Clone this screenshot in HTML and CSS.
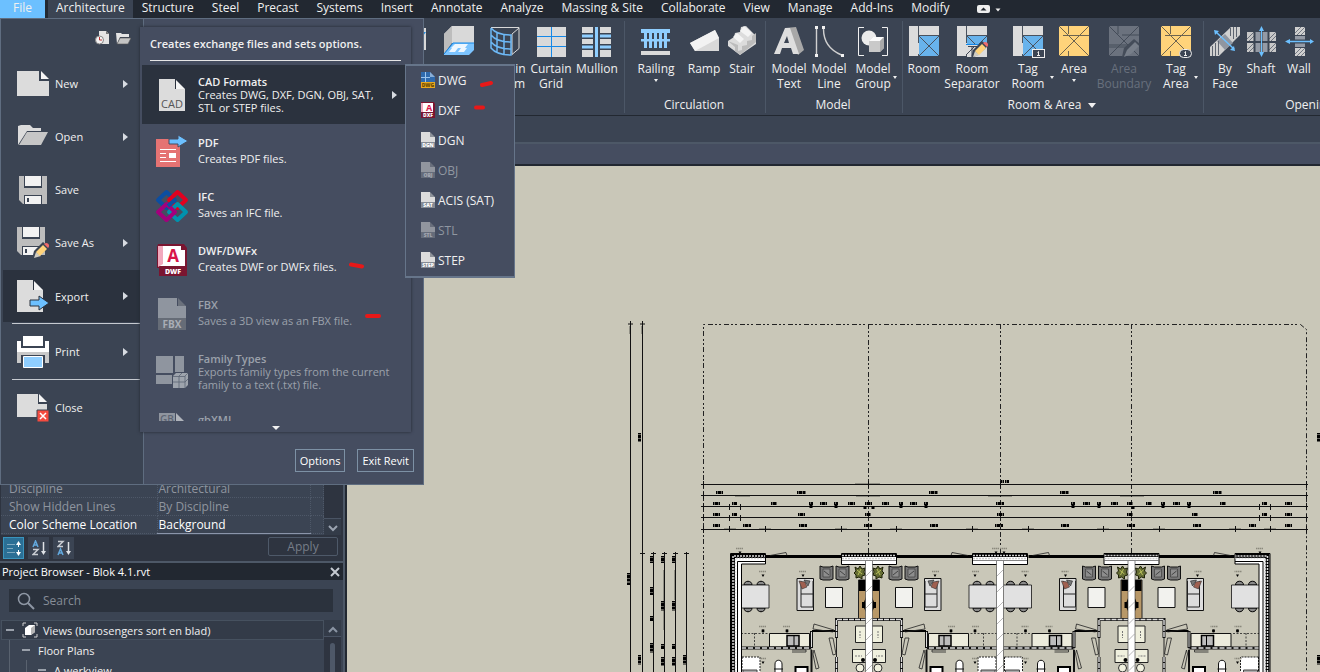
FILE: index.html
```html
<!DOCTYPE html>
<html lang="en">
<head>
<meta charset="utf-8">
<title>Blok 4.1.rvt</title>
<link rel="stylesheet" href="styles.css">
</head>
<body>
<div class="app">
  <nav class="tabs">
    <button class="tab tab-file">File</button>
    <button class="tab tab-active">Architecture</button>
    <button class="tab">Structure</button>
    <button class="tab">Steel</button>
    <button class="tab">Precast</button>
    <button class="tab">Systems</button>
    <button class="tab">Insert</button>
    <button class="tab">Annotate</button>
    <button class="tab">Analyze</button>
    <button class="tab">Massing &amp; Site</button>
    <button class="tab">Collaborate</button>
    <button class="tab">View</button>
    <button class="tab">Manage</button>
    <button class="tab">Add-Ins</button>
    <button class="tab">Modify</button>
    <button class="tab tab-toggle" aria-label="Minimize ribbon"><svg width="24" height="10" viewBox="0 0 24 10"><rect x="0" y="1" width="13" height="8" rx="2" fill="#eee"/><path d="M3.500 6.500h6L6.500 3.500z" fill="#222831"/><path d="M18.500 4.500h5l-2.500 3z" fill="#eee"/></svg></button>
  </nav>

  <div class="ribbon">
    <section class="panel panel-build">
      <div class="tools">
        <button class="tool w48" aria-label="Component"><svg class="ico" viewBox="0 0 32 32"><path d="M2 2h29v22H2z" fill="#d9d9d9"/><path d="M25 6h6l-3 4z" fill="#2a8fe0"/></svg></button>
        <button class="tool w48" aria-label="Floor"><svg class="ico" viewBox="0 0 32 32"><path d="M1 8l8-8h22v17H1z" fill="#d9d9d9"/><path d="M1 8l8-8v17L1 28z" fill="#bdbdbd"/><path d="M1 28l9-11h21v7l-5 5H1z" fill="#7cc4ff"/><path d="M8 22l4-4h6l-3 4zM18 18h7l-3 4h-7zM6 26l3-4h6l-3 4zM18 22h6l-3 4h-6z" fill="#eef7ff"/><path d="M1 28l9-11h21" fill="none" stroke="#1488e8"/></svg></button>
        <button class="tool w44"><svg class="ico" viewBox="0 0 32 32"><g fill="none" stroke="#d9d9d9"><path d="M2 1.500h28v21l-7 6V8l7-6"/></g><g fill="none" stroke="#6db8f5" stroke-width="1.500"><path d="M2 2v20c4 5 12 7 20 7V9C14 9 6 7 2 2M2 9c4 5 12 7 20 7M2 16c4 5 12 7 20 7M8 7v20M15 9v20"/></g></svg><span>Curtain<br>System</span></button>
        <button class="tool w48"><svg class="ico" viewBox="0 0 32 32"><path d="M2 1h29v30H2z" fill="#d9d9d9"/><path d="M2 10.500h29M2 20.500h29M16.500 1v30" stroke="#1488e8" fill="none"/></svg><span>Curtain<br>Grid</span></button>
        <button class="tool w44"><svg class="ico" viewBox="0 0 32 32"><path d="M1 1h29v30H1z" fill="#d9d9d9"/><path d="M1 7h29v6H1zM1 18h29v6H1zM12 1h7v30h-7z" fill="#3b4453"/><path d="M1 8.500h11v3H1zM19 8.500h11v3H19zM1 19.500h11v3H1zM19 19.500h11v3H19zM14 1h3v30h-3z" fill="#8fceff"/></svg><span>Mullion</span></button>
      </div>
    </section>
    <section class="panel">
      <div class="tools">
        <button class="tool w56 drop-below"><svg class="ico" viewBox="0 0 32 32"><path d="M1 3h29v4H1zM1 13h29v2.500H1zM4 7h3v15H4zM9 7h3v15H9zM14 7h3v15h-3zM19 7h3v15h-3zM24 7h3v15h-3z" fill="#8fceff"/><path d="M1 25h29v4H1z" fill="#d9d9d9"/></svg><span>Railing</span></button>
        <button class="tool w40"><svg class="ico" viewBox="0 0 32 32"><path d="M2 17L27 4l4 8v13H7z" fill="#d9d9d9"/><path d="M2 17L27 4l4 8L7 25z" fill="#f2f2f2"/></svg><span>Ramp</span></button>
        <button class="tool w36"><svg class="ico" viewBox="0 0 32 32"><path d="M2 15l6-4 1-4 5-1 1-5 5-1 10 10v8L14 29 2 20z" fill="#dcdcdc"/><path d="M2 15l7 6v4l5 4 16-13V7l-4 3v4l-5 1v4l-5 1v4l-4 1v-6z" fill="#bcbcbc"/><path d="M7 11l7 6 4-4-7-6zM14 5l8 6 4-4-8-7z" fill="#f4f4f4"/></svg><span>Stair</span></button>
      </div>
      <h2 class="panel-name">Circulation</h2>
    </section>
    <section class="panel">
      <div class="tools">
        <button class="tool w40"><svg class="ico" viewBox="0 0 32 32"><path d="M12 2l11-1 8 23-6 5-9-20z" fill="#a8a8a8"/><path d="M1 28L12 2h5l9 26h-6l-2-6H9l-2 6zm10-11h5l-2-7z" fill="#dedede" fill-rule="evenodd"/></svg><span>Model<br>Text</span></button>
        <button class="tool w40"><svg class="ico" viewBox="0 0 32 32"><path d="M3.500 3v26M10.500 3c0 12 6 21 18 26" fill="none" stroke="#d0d0d0" stroke-width="1.400"/><path d="M2 0h3v3H2zM9 0h3v3H9zM2 28h3v3H2zM28 28h3v3h-3z" fill="#f2f2f2"/></svg><span>Model<br>Line</span></button>
        <button class="tool w48 drop-side"><svg class="ico" viewBox="0 0 32 32"><path d="M7 1.500H1.500v28H7M25 1.500h5.500v28H25" fill="none" stroke="#f0f0f0"/><circle cx="12" cy="12" r="7.500" fill="#ebebeb"/><path d="M12 15l4-4h11v11l-4 4H12z" fill="#c9c9c9"/><path d="M12 15l4-4h11l-4 4z" fill="#fafafa"/><path d="M23 15l4-4v11l-4 4z" fill="#a9a9a9"/></svg><span>Model<br>Group</span></button>
      </div>
      <h2 class="panel-name">Model</h2>
    </section>
    <section class="panel">
      <div class="tools">
        <button class="tool w36"><svg class="ico" viewBox="0 0 32 32"><use href="#room"/></svg><span>Room</span></button>
        <button class="tool w60"><svg class="ico" viewBox="0 0 32 32"><use href="#room"/><path d="M11 18h20v13H11z" fill="#dcdcdc"/><path d="M10 18.500h20" stroke="#1488e8"/><path d="M12 20.500h14M10 29l9-9M16 20v10" stroke="#3f4653" fill="none"/><use href="#pencil"/></svg><span>Room<br>Separator</span></button>
        <button class="tool w52 drop-side"><svg class="ico" viewBox="0 0 32 32"><use href="#room"/><rect x="20.500" y="23.500" width="12" height="8" fill="#3b4453" stroke="#eee"/><path d="M25.500 26.500l1-1v4m-1.500 0h3" stroke="#eee" fill="none"/></svg><span>Tag<br>Room</span></button>
        <button class="tool w40 drop-below"><svg class="ico" viewBox="0 0 32 32"><use href="#area"/></svg><span>Area</span></button>
        <button class="tool w60" disabled><svg class="ico" viewBox="0 0 32 32"><path d="M1 0h30v30H1z" fill="#6b727e"/><path d="M1 0l30 30M31 0L1 30M1 19h30M10 0v8M14 9h17M1 21h24" stroke="#444c59" fill="none"/><path d="M14 31l2-9 10-9 6 5-10 9z" fill="#444c59"/><path d="M16 31l3-7 8-8 4 4-8 8z" fill="#777e89"/></svg><span>Area<br>Boundary</span></button>
        <button class="tool w44 drop-side"><svg class="ico" viewBox="0 0 32 32"><use href="#area"/><rect x="19.500" y="23.500" width="12" height="8" rx="4" fill="#3b4453" stroke="#eee"/><path d="M24.500 26.500l1-1v4m-1.500 0h3" stroke="#eee" fill="none"/></svg><span>Tag<br>Area</span></button>
      </div>
      <h2 class="panel-name panel-more">Room &amp; Area</h2>
    </section>
    <section class="panel">
      <div class="tools">
        <button class="tool w36"><svg class="ico" viewBox="0 0 32 32"><path d="M1 30V21L22 1h9v8L10 30z" fill="#d0d0d0"/><path d="M8 15l8 9 8-7-8-9z" fill="#9096a0"/><path d="M3.500 20v10M6.500 17v13M9.500 15v14M21.500 2v8M24.500 1v12M27.500 1v10" stroke="#5d6470" fill="none"/><path d="M7 6l18 17" stroke="#6cc0ff" stroke-width="1.500"/><path d="M5 4l5 1-4 4zM26 25l-5-1 4-4z" fill="#6cc0ff"/></svg><span>By<br>Face</span></button>
        <button class="tool w36"><svg class="ico" viewBox="0 0 32 32"><path d="M2 6h29v9H2zM2 17h29v9H2z" fill="#c8c8c8"/><path d="M2 13l7-7M4 15l6-6M24 13l7-7M26 15l5-5M2 24l7-7M4 26l6-6M24 24l7-7M26 26l5-5" stroke="#6c727d"/><path d="M10 6h13v9H10zM10 17h13v9H10z" fill="#949aa5"/><path d="M9.500 5v22M23.500 5v22M16.500 5v22" stroke="#3b4453" stroke-width="2"/><path d="M16.500 3v25" stroke="#6cc0ff"/><path d="M14 5l2.500-5L19 5zM14 26h5l-2.500 5z" fill="#6cc0ff"/></svg><span>Shaft</span></button>
        <button class="tool w40"><svg class="ico" viewBox="0 0 32 32"><path d="M12 1h10v8H12zM12 22h10v8H12z" fill="#d0d0d0"/><path d="M12 7l6-6M14 9l8-8M18 9l4-4M12 28l6-6M14 30l8-8M18 30l4-4" stroke="#747a84"/><path d="M12 10h10v11H12z" fill="#949aa5"/><path d="M3 15.500h27" stroke="#3b4453" stroke-width="4"/><path d="M4 15.500h25" stroke="#6cc0ff" stroke-width="1.500"/><path d="M7 13l-5 2.500L7 18zM27 13v5l4-2.500z" fill="#6cc0ff"/></svg><span>Wall</span></button>
        <button class="tool w44" aria-label="Vertical"></button>
        <button class="tool w48" aria-label="Dormer"></button>
      </div>
      <h2 class="panel-name">Opening</h2>
    </section>
  </div>
  <div class="options-bar"></div>
  <div class="view-bar"></div>

  <main class="workspace">
    <aside class="dock">
      <section class="properties">
        <div class="prop-body">
          <table class="props">
            <tr><th scope="row">Discipline</th><td>Architectural</td><td></td></tr>
            <tr><th scope="row">Show Hidden Lines</th><td>By Discipline</td><td></td></tr>
            <tr class="lit"><th scope="row">Color Scheme Location</th><td>Background</td><td></td></tr>
          </table>
          <div class="scroll"><button class="step" aria-label="Scroll down"><svg width="10" height="7" viewBox="0 0 10 7"><path d="M1 1l4 4 4-4" fill="none" stroke="#9aa3b0" stroke-width="2"/></svg></button></div>
        </div>
        <div class="prop-tools">
          <button class="sq sq-on" aria-label="Group"><svg width="14" height="16" viewBox="0 0 14 16"><path d="M0 4.500h8M0 8.500h6M0 12.500h8" stroke="#7fa9c0"/><path d="M11.500 3v4M11.500 10v4" stroke="#fff"/><path d="M9 5l2.500-4L14 5zM9 12h5l-2.500 4z" fill="#fff"/></svg></button>
          <button class="sq" aria-label="Sort ascending"><svg width="14" height="16" viewBox="0 0 14 16"><path d="M1 7l2.500-6L6 7M2 5h3" stroke="#62a8dd" stroke-width="1.500" fill="none"/><path d="M1 9.500h5L1 14.500h5" stroke="#c8ccd2" stroke-width="1.500" fill="none"/><path d="M11.500 2v10" stroke="#dfe2e6" stroke-width="1.500"/><path d="M9 11h5l-2.500 4z" fill="#dfe2e6"/></svg></button>
          <button class="sq" aria-label="Sort descending"><svg width="14" height="16" viewBox="0 0 14 16"><path d="M1 1.500h5L1 6.500h5" stroke="#c8ccd2" stroke-width="1.500" fill="none"/><path d="M1 15l2.500-6L6 15M2 13h3" stroke="#62a8dd" stroke-width="1.500" fill="none"/><path d="M11.500 2v10" stroke="#dfe2e6" stroke-width="1.500"/><path d="M9 11h5l-2.500 4z" fill="#dfe2e6"/></svg></button>
          <button class="apply" disabled>Apply</button>
        </div>
      </section>
      <section class="browser">
        <header class="browser-head"><h2>Project Browser - Blok 4.1.rvt</h2><button class="close" aria-label="Close"><svg width="10" height="10" viewBox="0 0 10 10"><path d="M1 1l8 8M9 1L1 9" stroke="#c5cad1" stroke-width="2"/></svg></button></header>
        <label class="search"><svg width="18" height="18" viewBox="0 0 18 18"><circle cx="7" cy="7" r="5.500" fill="none" stroke="#8e97a4" stroke-width="1.500"/><path d="M11 11l6 6" stroke="#8e97a4" stroke-width="2"/></svg><input type="text" placeholder="Search" aria-label="Search"></label>
        <div class="tree-wrap">
          <ul class="tree">
            <li class="root"><i class="minus"></i><svg width="16" height="16" viewBox="0 0 16 16"><path d="M1 4V1h3M12 1h3v3M15 12v3h-3M4 15H1v-3" fill="none" stroke="#d0d0d0"/><path d="M3 6l4-3h6v7l-4 3H3z" fill="#fff"/><path d="M9 6l4-3v7l-4 3z" fill="#b5b5b5"/></svg>Views (burosengers sort en blad)</li>
            <li class="lvl1"><i class="minus"></i>Floor Plans</li>
            <li class="lvl2"><i class="minus"></i>A werkview</li>
          </ul>
          <div class="scroll scroll-up"><button class="step" aria-label="Scroll up"><svg width="10" height="7" viewBox="0 0 10 7"><path d="M1 6l4-4 4 4" fill="none" stroke="#8a94a3" stroke-width="2"/></svg></button><i class="thumb"></i></div>
        </div>
      </section>
    </aside>
    <div class="canvas">
      <svg class="plan" viewBox="347 166 973 506" preserveAspectRatio="xMinYMin slice" role="img" aria-label="Floor plan">
        <defs>
          <g id="room"><path d="M1 0h30v30H1z" fill="#dcdcdc"/><path d="M11 10h20v20H11z" fill="#68b3ec"/><path d="M10.500 0v17M10.500 30v-2M11 9.500h20M11 10l20 20M31 10L11 30" fill="none" stroke="#4a525e"/></g>
          <g id="area"><path d="M1 0h30v30H1z" fill="#ffd37a"/><path d="M1 0l30 30M31 0L1 30M10.500 0v8M5 9.500h26M10.500 25v5" stroke="#6d6450" fill="none"/></g>
          <g id="pencil"><path d="M15 32l2-8 9-9 6 5-10 9z" fill="#3b4453"/><path d="M17 31l2-6 5 4z" fill="#d0ccc0"/><path d="M19 25l7-7 4 4-7 7z" fill="#ffd37a"/><path d="M27 17c3-3 7 1 4 4z" fill="#f06a6a"/></g>
          <g id="chair"><path d="M-4 4C-4-1 4-1 4 4z" fill="#8a8a8a" stroke="#000" stroke-width="1"/></g>
          <g id="tag" fill="none"><path d="M-4-3.500h7" stroke="#8b897d" stroke-width="1.500" stroke-dasharray="1.500 .5"/><path d="M-1.500-.5h3L0 2z" fill="#000"/></g>
          <g id="armchair"><path d="M0 0l3 1h7l3-1v13l-3 1H3l-3-1z" fill="#777" stroke="#111"/><path d="M3 3h7v8H3z" fill="#8d8d8d" stroke="#333" stroke-width=".6"/><path d="M4 5l5 4" stroke="#444"/></g>
          <g id="unit">
            <g><use href="#chair" x="748" y="581"/><use href="#chair" x="761" y="581"/><g transform="translate(0 1192) scale(1 -1)"><use href="#chair" x="748" y="580"/><use href="#chair" x="761" y="580"/></g><path d="M741 585h28v23h-28" fill="#e1e1e1" stroke="#111" stroke-width=".8"/></g>
            <path d="M797 578.500h16.500v32H797z" fill="#ddd" stroke="#111"/><path d="M801 581v26h12V581M801 594h12" fill="none" stroke="#222" stroke-width="1"/><path d="M799 581l6 1 2 5-5 2z" fill="#a06050" stroke="#333" stroke-width=".6"/><path d="M804 580l6 1-2 5z" fill="#777" stroke="#222" stroke-width=".6"/>
            <path d="M825.500 587.500h17v20h-17z" fill="#f2f2ee" stroke="#111"/>
            <use href="#armchair" x="820" y="566"/><use href="#armchair" x="836" y="566"/>
            <path d="M855 567l3 2 2-3 2 3 3-1-1 4 1 3-3 1 0 3-3-2-3 1 0-3-2-2 2-2z" fill="#646c33" stroke="#1d2008"/><path d="M857 570l5 4M861 569l-3 6" stroke="#b9c05c"/>
            <path d="M858.500 580h8v39h-8z" fill="#b89868" stroke="#222"/><path d="M859 580h8v11h-8zM866 597v15l-2-4h-2v-6h2z" fill="#000"/>
            <path d="M866 619.500h-29.500V638M836.500 657v15" fill="none" stroke="#111" stroke-width="3"/><path d="M866 619.500h-29.500V638M836.500 657v15" fill="none" stroke="#ddd" stroke-width="1.400" stroke-dasharray="5 1"/><path d="M836.500 638v19" stroke="#222"/>
            <path d="M855.500 626h11v16.500h-11zM852.500 649.500h14v13h-14z" fill="#f0f0de" stroke="#222"/><circle cx="860" cy="668" r="4" fill="#f0f0de" stroke="#333"/><path d="M860 631v7M855 656h7" stroke="#777" stroke-dasharray="2 1"/><circle cx="863" cy="660" r="2"/>
            <path d="M769.500 633.500h40V647h-40z" fill="#ecebdc" stroke="#111"/><path d="M741 633.500h28M754.500 633v14" stroke="#222" stroke-width=".8" stroke-dasharray="2 1.500" fill="none"/>
            <path d="M787 635.500h12V646h-12z" fill="#bcbcbc" stroke="#000" stroke-width="1.500"/><path d="M794 636v10" stroke="#000" stroke-width="1"/>
            <path d="M741 648h71" stroke="#111" stroke-width="3"/><path d="M741 648h71" stroke="#ddd" stroke-width="1.400" stroke-dasharray="5 2"/>
            <path d="M811.500 631v17" stroke="#111" stroke-width="3"/><path d="M811.500 632v15" stroke="#ddd"/><path d="M811.500 650v22" stroke="#111" stroke-width="2"/><path d="M812 631h23" stroke="#000" stroke-width="2"/>
            <path d="M814 624l20 6-1 2-20-3zM833 638l-4 0 4 17 3-1zM814 650l5 18-3 1-3-15zM792 650h14v2h-14" fill="none" stroke="#222" stroke-width=".8"/>
            <path d="M742 657h18v16h-18z" fill="#fff" stroke="#222" stroke-dasharray="2 1"/><path d="M743 670h14v3h-14z" fill="#aaa" stroke="#444"/>
            <path d="M775 673v-9c0-5 7-5 7 0v9z" fill="#fff" stroke="#111"/><path d="M774 669h9" stroke="#111"/><path d="M795.500 667h12v6h-12z" fill="#fff" stroke="#000" stroke-width="2"/>
            <use href="#tag" x="763" y="575"/><use href="#tag" x="803" y="575"/><use href="#tag" x="763" y="630"/><use href="#tag" x="787" y="630"/><use href="#tag" x="763" y="662"/><circle cx="763" cy="631" r="1.500"/><circle cx="787" cy="631" r="1.500"/>
            <path d="M766 556.500h76" stroke="#000" stroke-width="3"/><path d="M770 555.500l16-3 1 3" fill="none" stroke="#222" stroke-width=".8"/>
          </g>
          <g id="pier"><path d="M-27.500 553.500h55v11h-55z" fill="#fff" stroke="#000"/><path d="M-27 555.500h54" stroke="#000" stroke-width="3"/><path d="M-27 558.500h54M-27 555.500h54" stroke="#ccc" stroke-width="1.500" stroke-dasharray="2 1"/><path d="M-3.500 561h7v111h-7z" fill="#fff"/><path d="M-3.500 561v111M3.500 561v111M-27 560.500h54" stroke="#333" stroke-width=".6"/><path d="M-3 576l6-6M-3 592l6-6M-3 608l6-6M-3 624l6-6M-3 640l6-6M-3 656l6-6M-3 671l6-6" stroke="#999" stroke-width=".7"/></g>
          <g id="corner"><path d="M730.500 672V553.500h35V564h-24v108" fill="#fff" stroke="#000"/><path d="M733 672V556h32" fill="none" stroke="#000" stroke-width="4"/><path d="M733 672V556h32M735.500 672V558.500h30" fill="none" stroke="#ddd" stroke-width="1.500" stroke-dasharray="2 1"/><path d="M737.500 672V561.500h28" fill="none" stroke="#000"/></g>
        </defs>
        <g class="grid">
          <path d="M703.500 672V324.500h597l6 5V672"/><path d="M868.500 324v230M1000.500 324v230M1131.500 324v230"/>
        </g>
        <g class="dimline">
          <path d="M701 484.500h607M701 495.500h607M701 506.500h607M701 517.500h607M701 529.500h607M630.500 321v351M642.500 321v351M653.500 552v120M664.500 552v120M675.500 552v120M686.500 552v120"/>
          <path d="M628 324h5M640 324h5M640 553.500h5M651 553.500h5M662 553.500h5M673 553.500h5M684 553.500h5M703.500 481v7M703.500 492v7M703.500 503v7M703.500 514v7M703.500 526v7M1306.500 481v7M1306.500 492v7M1306.500 503v7M1306.500 514v7M1306.500 526v7M1000.500 481v7M868.500 481v7M729.500 504v6M740.500 504v6M729.500 515v6M740.500 515v6M729.500 526v6M765.500 526v6M841.500 526v6M896.500 526v6M972.500 526v6M1028.500 526v6M1103.500 526v6M1159.500 526v6M1235.500 526v6M1270.500 526v6M1259.500 504v6M1270.500 504v6M1259.500 515v6M1270.500 515v6"/>
          <path opacity=".3" stroke-width="2" d="M855 484h25M735 496h15M856 496h24M988 496h24M1120 496h24M724 529h12M759 529h12M835 529h12M890 529h12M966 529h12M1022 529h12M1097 529h12M1153 529h12M1229 529h12M1264 529h12M642 326v8M630 326v8M664 570v60M675 570v30"/>
        </g>
        <path class="dims" d="M1001 481.500h3M1005 481.500h4M716 492.500h7M797 492.500h9M929 492.500h9M1060 492.500h9M1213 492.500h9M713 503.500h7M732 503.500h5M771 503.500h6M809 503.500h4M820 503.500h7M834 503.500h4M848 503.500h7M865 503.500h7M882 503.500h7M899 503.500h4M910 503.500h7M924 503.500h4M996 503.500h8M1071 503.500h4M1083 503.500h7M1097 503.500h4M1111 503.500h7M1127 503.500h6M1146 503.500h6M1161 503.500h4M1173 503.500h7M1187 503.500h4M1220 503.500h6M1262 503.500h5M1285 503.500h7M713 514.500h7M732 514.500h5M798 514.500h7M865 514.500h6M997 514.500h7M1127 514.500h6M1192 514.500h6M1262 514.500h5M1285 514.500h7M713 525.500h7M743 525.500h8M799 525.500h8M864 525.500h8M930 525.500h8M995 525.500h8M1061 525.500h8M1127 525.500h8M1193 525.500h8M1249 525.500h7M1285 525.500h7"/>
        <path class="dims" d="M639.500 433v9M628.500 573v12M639.500 655v10M651.500 556v7M651.500 587v8M651.500 616v5M651.500 643v10M662.500 556v7M662.500 601v10M662.500 644v5M662.500 657v9M673.500 556v7M673.500 601v10M673.500 644v5M673.500 657v9M684.500 655v10M1318.500 433v9M1318.500 655v10"/>
        <path d="M811 504v4M836 504v4M865 506v3M873 506v3M901 504v4M926 504v4M1073 504v4M1099 504v4M1133 506v3M1163 504v4M1189 504v4" stroke="#000" stroke-width="3"/>
        <use href="#unit"/>
        <use href="#unit" transform="translate(1738 0) scale(-1 1)"/>
        <use href="#unit" transform="translate(262.500 0)"/>
        <use href="#unit" transform="translate(2000.500 0) scale(-1 1)"/>
        <use href="#corner"/><use href="#corner" transform="translate(2000.500 0) scale(-1 1)"/>
        <use href="#pier" x="869"/><use href="#pier" x="1000"/><use href="#pier" x="1131.500"/>
        <use href="#tag" x="740" y="552"/><use href="#tag" x="996" y="552"/><use href="#tag" x="1004" y="552"/><use href="#tag" x="1260" y="552"/>
      </svg>
    </div>
  </main>

  <div class="appmenu">
    <div class="menu-left">
      <div class="recent">
        <button aria-label="Recent documents"><svg width="14" height="14" viewBox="0 0 14 14"><path d="M4 0h7l3 3v10H4z" fill="#e4e4e4"/><path d="M11 0v3h3" fill="#777"/><circle cx="4.500" cy="9" r="4" fill="#f4f4f4" stroke="#888"/><path d="M4.500 6v3H7" stroke="#b33" fill="none"/></svg></button>
        <button aria-label="Open documents"><svg width="15" height="13" viewBox="0 0 15 13"><path d="M0 1h5l1 1h7v3H4L1 12z" fill="#e4e4e4"/><path d="M4 6h11l-3 6H1z" fill="#c4c4c4" stroke="#555" stroke-width=".6"/></svg></button>
      </div>
      <button class="cmd more"><svg class="ico" viewBox="0 0 32 32"><path d="M0 3h22v10h10v15H0z" fill="#dcdcdc"/><path d="M24 3l8 8h-8z" fill="#f5f5f5"/></svg>New</button>
      <button class="cmd more"><svg class="ico" viewBox="0 0 32 32"><path d="M1 5l3-1h9l3 3h8v3H10L1 24z" fill="#dcdcdc"/><path d="M10 11h21l-7 13H2z" fill="#c6c6c6"/></svg>Open</button>
      <button class="cmd"><svg class="ico" viewBox="0 0 32 32"><use href="#disk" x="2" y="1"/></svg>Save</button>
      <button class="cmd more"><svg class="ico" viewBox="0 0 32 32"><use href="#disk" y="-1"/><use href="#pencil"/></svg>Save As</button>
      <button class="cmd more cmd-on"><svg class="ico" viewBox="0 0 32 32"><path d="M0 0h16v10h10v22H0z" fill="#dcdcdc"/><path d="M17 1l9 9h-9z" fill="#f5f5f5"/><path d="M13 20h9v-4l10 7-10 7v-4h-9z" fill="#6cc0ff" stroke="#2b323e"/></svg>Export</button>
      <hr>
      <button class="cmd more"><svg class="ico" viewBox="0 0 32 32"><path d="M6 0h20v10H6z" fill="#fff"/><path d="M0 5h4v7h24V5h4v11H0z" fill="#fff"/><path d="M0 16h32v11h-4v-8H4v8H0z" fill="#c9c9c9"/><path d="M6.500 20.500h19v11h-19z" fill="#8fceff" stroke="#fff"/></svg>Print</button>
      <hr>
      <button class="cmd"><svg class="ico" viewBox="0 0 32 32"><path d="M0 2h21v10h9v13H0z" fill="#dcdcdc"/><path d="M22 2l8 8h-8z" fill="#f5f5f5"/><path d="M20 18h12v12H20z" fill="#f44b3f" stroke="#3b4453"/><path d="M23 21l6 6M29 21l-6 6" stroke="#fff" stroke-width="1.500"/></svg>Close</button>
    </div>
    <div class="menu-right">
      <button class="btn">Options</button>
      <button class="btn">Exit Revit</button>
    </div>
  </div>

  <div class="export">
    <h2>Creates exchange files and sets options.</h2>
    <div class="export-list">
      <button class="exp exp-on more"><svg class="ico" viewBox="0 0 32 32"><path d="M3 0h16v10h10v22H3z" fill="#dcdcdc"/><path d="M20 1l9 9h-9z" fill="#f5f5f5"/><text x="16" y="29" class="t-cad">CAD</text></svg><span><b>CAD Formats</b>Creates DWG, DXF, DGN, OBJ, SAT,<br>STL or STEP files.</span></button>
      <button class="exp one"><svg class="ico" viewBox="0 0 32 32"><path d="M0 3h24v28H0z" fill="#e57373"/><path d="M4 13.500h16M4 17.500h6M4 21.500h6M4 25.500h16" stroke="#fff"/><path d="M13 17h7v5h-7z" fill="#fff"/><path d="M13 3h9v-4l10 6-10 6V8h-9z" fill="#6cc0ff" stroke="#454d60"/></svg><span><b>PDF</b>Creates PDF files.</span></button>
      <button class="exp one"><svg class="ico" viewBox="0 0 32 32"><g fill="none" stroke-width="4" stroke-linejoin="round"><path d="M10.500 2l8.500 8-8.500 8L2 10z" stroke="#0b4ea2"/><path d="M21.500 2l8.500 8-8.500 8-8.500-8z" stroke="#e2001f"/><path d="M21.500 14l8.500 8-8.500 8-8.500-8z" stroke="#0092ad"/><path d="M10.500 14l8.500 8-8.500 8L2 22z" stroke="#a3007d"/><path d="M12 16l7-6" stroke="#0b4ea2"/></g></svg><span><b>IFC</b>Saves an IFC file.</span></button>
      <button class="exp one"><svg class="ico" viewBox="0 0 32 32"><path d="M2 0h26l3 4v28H3V24H1V3z" fill="#7a1530"/><path d="M2 2h23v4h4v16H2z" fill="#fff"/><path d="M2 2h5v18l-5 3z" fill="#f2a9bd"/><text x="17" y="18" class="t-a">A</text><text x="17" y="30" class="t-dwf">DWF</text></svg><span><b>DWF/DWFx</b>Creates DWF or DWFx files.</span></button>
      <button class="exp one" disabled><svg class="ico" viewBox="0 0 32 32"><path d="M2 0h19v8h9v13H2z" fill="#8f959f"/><path d="M22 0l8 8h-8z" fill="#6b717c"/><path d="M2 20h28v12H2z" fill="#666c77"/><text x="16" y="30" class="t-fbx">FBX</text></svg><span><b>FBX</b>Saves a 3D view as an FBX file.</span></button>
      <button class="exp exp-fam" disabled><svg class="ico" viewBox="0 0 32 32"><path d="M0 0h17v17H0zM19 0h9v16h-9zM0 19h16v9H0z" fill="#8f959f"/><path d="M17 20l3-3h12v12l-3 3H17z" fill="#9ea4ad"/><path d="M17 20.500h12M17 26h12l3-3M23 32V20l3-3M29 32V20l3-3" stroke="#5c6473" fill="none" stroke-width=".8"/></svg><span><b>Family Types</b>Exports family types from the current<br>family to a text (.txt) file.</span></button>
      <button class="exp exp-cut" disabled><svg class="ico" viewBox="0 0 32 32"><path d="M3 0h16v10h10v22H3z" fill="#8f959f"/><path d="M20 0l9 9h-9z" fill="#b0b4bb"/><text x="11" y="10" class="t-gb">GB</text></svg><span><b>gbXML</b></span></button>
    </div>
    <i class="scroll-more"></i>
  </div>

  <div class="formats">
    <button><svg width="14" height="16" viewBox="0 0 14 16"><path d="M0 0h9l5 5v11H0z" fill="#2f6aac"/><path d="M9 0v5h5" fill="#89aed6"/><path d="M0 5.500h9M4.500 0v10" stroke="#9cc5ee"/><path d="M0 10h14v6H0z" fill="#e9a820"/><text x="7" y="15" class="t-s dk">DWG</text></svg>DWG</button>
    <button><svg width="14" height="16" viewBox="0 0 14 16"><path d="M0 0h13l1 2v14H0z" fill="#7a1530"/><path d="M0 1h12v9H0z" fill="#fff"/><path d="M0 1h2v9H0z" fill="#f2a9bd"/><text x="8" y="9" class="t-sa">A</text><text x="7" y="15" class="t-s">DXF</text></svg>DXF</button>
    <button><svg width="14" height="16" viewBox="0 0 14 16"><use href="#fmt"/><text x="7" y="15" class="t-s">DGN</text></svg>DGN</button>
    <button disabled><svg width="14" height="16" viewBox="0 0 14 16"><use href="#fmt"/><text x="7" y="15" class="t-s">OBJ</text></svg>OBJ</button>
    <button><svg width="14" height="16" viewBox="0 0 14 16"><use href="#fmt"/><text x="7" y="15" class="t-s">SAT</text></svg>ACIS (SAT)</button>
    <button disabled><svg width="14" height="16" viewBox="0 0 14 16"><use href="#fmt"/><text x="7" y="15" class="t-s">STL</text></svg>STL</button>
    <button><svg width="14" height="16" viewBox="0 0 14 16"><use href="#fmt"/><text x="7" y="15" class="t-s">STEP</text></svg>STEP</button>
  </div>

  <svg class="marks" width="520" height="340" viewBox="0 0 520 340">
    <defs>
      <g id="disk"><path d="M0 1h28v28H4l-4-4z" fill="#bdbdbd"/><path d="M5 1h18v12H5z" fill="#3b4453"/><path d="M6 1h16v10H6z" fill="#f2f2f2"/><path d="M5 20h18v9H5z" fill="#3b4453"/><path d="M6 21h16v8H6z" fill="#f2f2f2"/><path d="M8 23h2v4H8z" fill="#3b4453"/></g>
      <g id="fmt"><path d="M0 0h9v5h5v6H0z" fill="#dcdcdc"/><path d="M9 0l5 5H9z" fill="#8d9299"/><path d="M0 10h14v6H0z" fill="#858b95"/></g>
    </defs>
    <g fill="none" stroke="#e81818" stroke-width="4" stroke-linecap="round"><path d="M482 85l9-2M476 107.500h7M351 264.500l11 2M367 316h12"/></g>
  </svg>
</div>
</body>
</html>
```
FILE: styles.css
```css
* { box-sizing: border-box; }
html, body { height: 100%; }
body {
  margin: 0;
  overflow: hidden;
  background: #3b4453;
  color: #f0f0f0;
  font: 12px/15px "Open Sans", "Noto Sans", sans-serif;
}
button {
  margin: 0;
  padding: 0;
  border: 0;
  background: none;
  color: inherit;
  font: inherit;
}
h2 { margin: 0; font: inherit; }
.app { position: relative; display: flex; flex-direction: column; height: 100%; }
.ico { display: block; width: 32px; height: 32px; flex: none; overflow: visible; }

.tabs { display: flex; flex: none; height: 18px; background: #222831; line-height: 16px; overflow: hidden; }
.tab { padding: 0 9px 2px; font-size: 12px; white-space: nowrap; }
.tab-file { width: 45px; margin-right: 3px; background: #6cc0ff; }
.tab-active { padding: 0 8px 2px; background: #3b4453; }
.tab-toggle { padding: 1px 18px 0; }

.ribbon { display: flex; flex: none; height: 97px; overflow: hidden; }
.panel { display: flex; flex-direction: column; flex: none; padding: 8px 5px 0 4px; position: relative; }
.panel + .panel::before { content: ""; position: absolute; left: 0; top: 3px; bottom: 2px; width: 1px; background: #4c5767; }
.panel-build { width: 624px; }
.tools { display: flex; justify-content: flex-end; height: 71px; }
.panel-name { text-align: center; }
.panel-more::after { content: ""; display: inline-block; margin-left: 7px; border: 4px solid transparent; border-top: 5px solid #f0f0f0; border-bottom: 0; vertical-align: 1px; }
.tool { display: flex; flex-direction: column; align-items: center; gap: 3px; position: relative; text-align: center; flex: none; }
.tool span { white-space: nowrap; }
.tool:disabled { color: #68707d; }
.w36 { width: 36px; } .w40 { width: 40px; } .w44 { width: 44px; } .w48 { width: 48px; }
.w52 { width: 52px; } .w56 { width: 56px; } .w60 { width: 60px; }
.drop-below::after, .drop-side::after { content: ""; position: absolute; border: 2px solid transparent; border-top: 3px solid #f0f0f0; border-bottom: 0; }
.drop-below::after { top: 53px; }
.drop-side::after { top: 50px; right: 0; }
.options-bar { flex: none; height: 27px; border-top: 1px solid #222831; }
.view-bar { flex: none; height: 24px; border-top: 2px solid #4d5867; border-bottom: 2px solid #222831; background: #454d60; }

.workspace { display: flex; flex: 1; min-height: 0; }
.dock { display: flex; flex-direction: column; flex: none; width: 347px; border-right: 2px solid #222831; font-size: 12px; }
.properties { display: flex; flex-direction: column; flex: 1; min-height: 0; border-right: 2px solid #4d5867; background: #2e3440; }
.prop-body { display: flex; flex: 1; align-items: stretch; margin: 0 2px 0 1px; background: #3b4453; }
.props { align-self: flex-end; width: 323px; margin-bottom: 1px; border-collapse: collapse; color: #8f959f; }
.props th, .props td { height: 18px; padding: 0 1px; border: 1px dotted #4e5868; border-left: 0; text-align: left; font-weight: 400; line-height: 15px; }
.props th { width: 156px; padding-left: 8px; }
.props td:last-child { width: 13px; }
.props .lit { color: #fff; }
.lit td:nth-child(2) { border-bottom: 1px solid #8b95aa; }
.scroll { display: flex; flex-direction: column; justify-content: flex-end; flex: 1; background: #2e3440; }
.step { height: 17px; border-top: 1px solid #4a5464; background: #333b48; }
.prop-tools { display: flex; gap: 4px; height: 26px; padding: 2px 5px 2px 3px; }
.sq { width: 21px; height: 22px; background: #3b4453; }
.sq svg { display: block; margin: auto; }
.sq-on { background: #2b6f95; border: 1px solid #3a94bd; }
.apply { width: 70px; height: 19px; margin-left: auto; border: 1px solid #4e5969; border-radius: 2px; color: #767d88; line-height: 17px; }

.browser { flex: none; height: 111px; overflow: hidden; border-right: 2px solid #4d5867; border-top: 2px solid #4d5867; background: #3b4453; }
.browser-head { display: flex; justify-content: space-between; align-items: center; height: 17px; padding: 0 3px 0 2px; background: #222831; color: #fff; font-size: 11px; }
.close svg { display: block; }
.search { display: flex; align-items: center; gap: 6px; height: 23px; margin: 9px 10px 8px 9px; padding-left: 8px; background: #2b323d; }
.search input { flex: 1; border: 0; outline: 0; background: none; color: #fff; font: inherit; }
.search input::placeholder { color: #868d97; opacity: 1; }
.tree-wrap { display: flex; height: 52px; padding: 0 2px 0 1px; }
.tree { flex: 1; margin: 0; padding: 0; list-style: none; overflow: hidden; font-size: 11px; }
.tree li { display: flex; align-items: center; gap: 8px; height: 20px; white-space: nowrap; }
.tree .root { gap: 8px; padding-left: 4px; border: 1px solid #46515f; background: #333b48; }
.tree .root svg { margin-right: -3px; }
.tree .lvl1 { padding-left: 21px; background: linear-gradient(90deg, transparent 8px, #59626f 8px, #59626f 9px, transparent 9px); }
.tree .lvl2 { padding-left: 37px; background: linear-gradient(90deg, transparent 8px, #59626f 8px, #59626f 9px, transparent 9px, transparent 25px, #59626f 25px, #59626f 26px, transparent 26px); }
.minus { width: 8px; height: 2px; background: #9aa1ab; }
.scroll-up { flex: none; width: 17px; justify-content: flex-start; align-items: center; }
.scroll-up .step { width: 17px; border-top: 0; border-bottom: 1px solid #4a5464; }
.thumb { width: 5px; flex: 1; margin-top: 6px; border-radius: 3px 3px 0 0; background: #4e5868; }

.canvas { flex: 1; min-width: 0; background: #c9c7b8; overflow: hidden; }
.plan { display: block; width: 100%; height: 100%; }
.grid { fill: none; stroke: #222; stroke-width: 1; stroke-dasharray: 5 2 2 2 2 3; }
.dimline { fill: none; stroke: #111; stroke-width: 1; }
.dims { fill: none; stroke: #000; stroke-width: 3; stroke-dasharray: 1 .5 4 .5 2 .5; }

.appmenu { position: absolute; left: 0; top: 18px; display: flex; width: 424px; height: 467px; border: 1px solid #5f6d80; background: #454d60; font-size: 11px; }
.menu-left { display: flex; flex-direction: column; width: 143px; border-right: 1px solid #5f6d80; background: #3b4453; }
.recent { display: flex; justify-content: flex-end; align-items: center; gap: 7px; height: 38px; padding-right: 12px; }
.recent svg { display: block; }
.cmd { display: flex; align-items: center; gap: 6px; height: 53px; margin-left: 2px; padding-left: 14px; position: relative; text-align: left; }
.cmd-on { height: 52px; margin-top: 1px; background: #2b323e; }
.more::after { content: ""; position: absolute; right: 15px; top: 50%; margin-top: -4px; border: 4px solid transparent; border-left: 5px solid #d8dce2; border-right: 0; }
.menu-left hr { width: 131px; height: 1px; margin: 1px 0 1px 11px; border: 0; background: #c6cad0; }
.menu-right { display: flex; flex: 1; justify-content: flex-end; align-items: flex-end; gap: 12px; padding: 0 9px 12px; }
.btn { height: 23px; padding: 0 4px; border: 1px solid #7d91a5; color: #fff; font-size: 11px; }

.export { position: absolute; left: 140px; top: 27px; width: 271px; height: 405px; padding: 9px 0 0 2px; background: #454d60; box-shadow: 0 0 3px #222831; font-size: 11px; }
.export h2 { margin: 0 10px 4px 8px; padding-bottom: 9px; border-bottom: 1px solid #e6e6e6; font-weight: 600; }
.export-list { height: 356px; overflow: hidden; }
.exp { display: flex; gap: 10px; width: 263px; height: 54px; padding: 11px 0 0 14px; position: relative; text-align: left; line-height: 13px; white-space: nowrap; }
.exp-on { height: 59px; padding-top: 10px; background: #2b323e; margin-bottom: 1px; align-items: flex-start; }
.exp-on .ico { margin-top: 4px; }
.exp-fam .ico { margin-top: 4px; }
.exp-cut { padding-top: 18px; }
.exp-on.more::after { right: 8px; }
.exp b { display: block; font-weight: 600; }
.one b { margin-bottom: 3px; }
.exp:disabled { color: #9ba1ab; }
.scroll-more { display: block; width: 0; margin: 5px auto 0 130px; border: 4px solid transparent; border-top: 4px solid #f0f0f0; border-bottom: 0; }

.formats { position: absolute; left: 405px; top: 64px; width: 110px; height: 214px; padding: 0 0 0 15px; border: 2px solid #66758a; border-width: 2px 1px 2px 1px; background: #454d60; }
.formats button { display: flex; align-items: center; gap: 3px; width: 100%; height: 30px; padding-bottom: 2px; }
.formats button:disabled { color: #9097a1; }
.formats button:disabled svg { opacity: .5; }
.marks { position: absolute; left: 0; top: 0; pointer-events: none; }

text { font-family: "Open Sans", sans-serif; text-anchor: middle; }
.t-cad { font-size: 11px; fill: #555; }
.t-a { font-size: 17px; font-weight: 700; fill: #d8144a; }
.t-dwf { font-size: 7px; font-weight: 800; fill: #fff; }
.t-fbx { font-size: 10px; font-weight: 700; fill: #a9aeb6; }
.t-gb { font-size: 10px; font-weight: 600; fill: #5c6473; }
.t-s { font-size: 5px; font-weight: 800; fill: #fff; }
.t-s.dk { fill: #6b4a00; }
.t-sa { font-size: 9px; font-weight: 700; fill: #d8144a; }
```
